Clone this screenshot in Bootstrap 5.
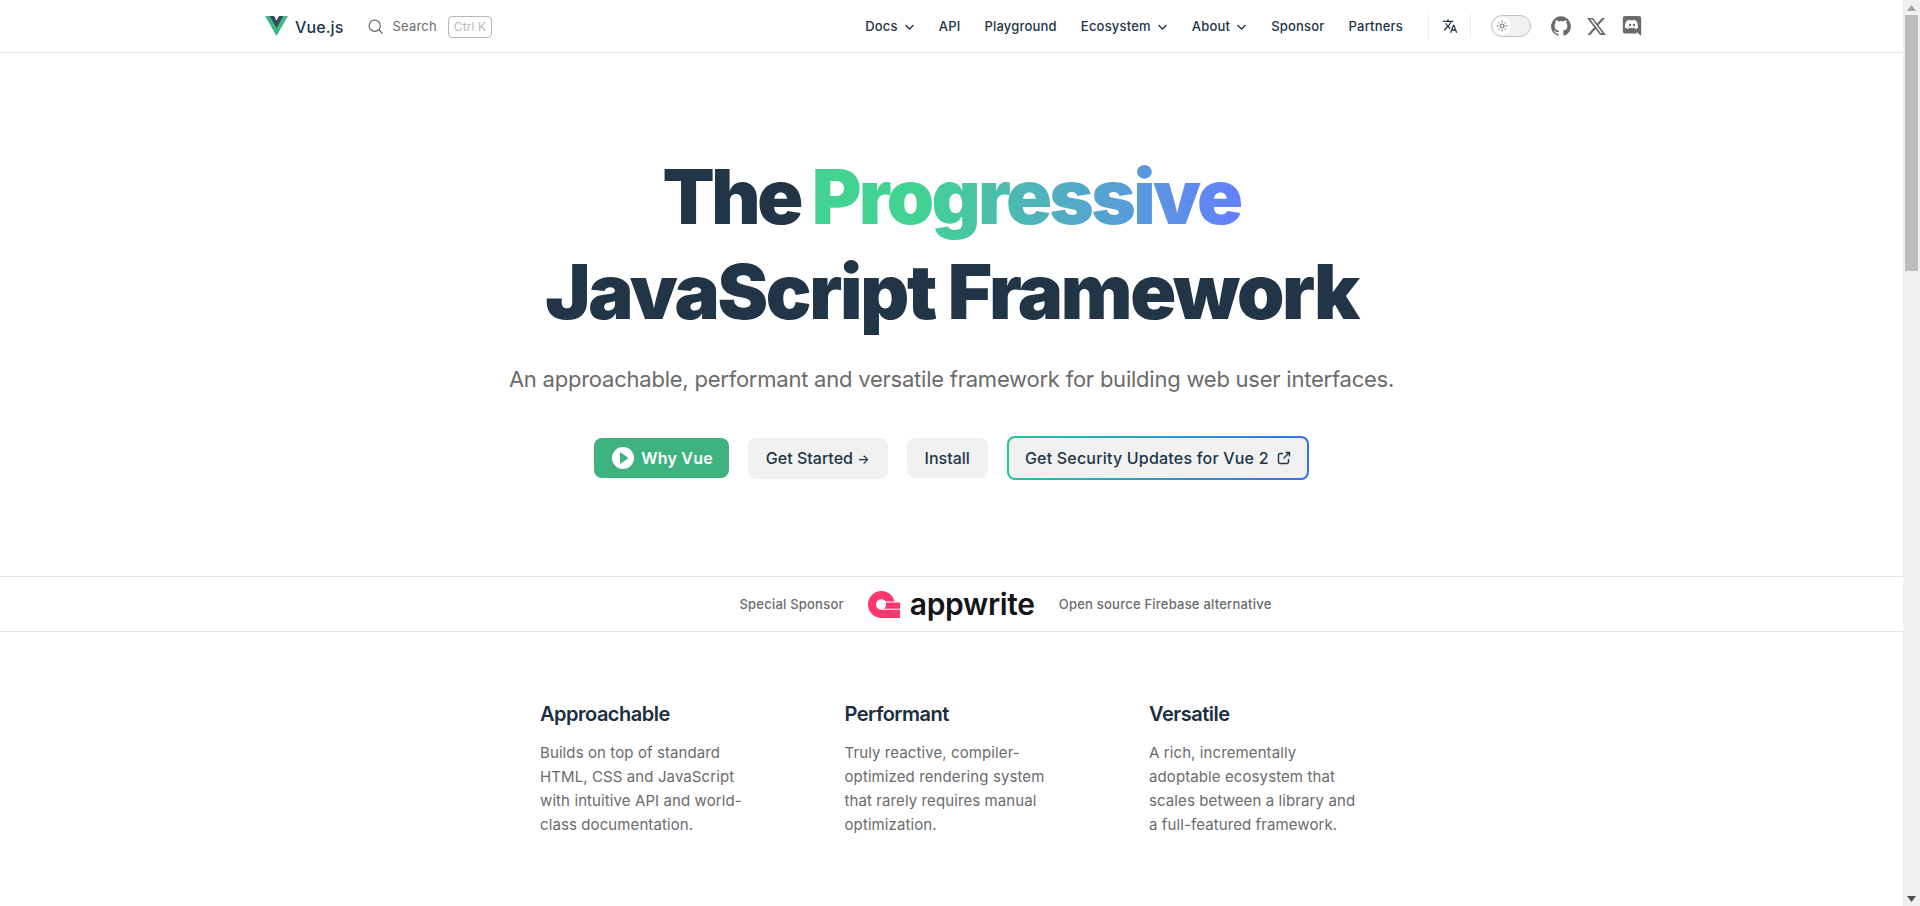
<!DOCTYPE html>
<html lang="en">
<head>
  <meta charset="UTF-8" />
  <title>Vue.js - The Progressive JavaScript Framework</title>
  <link href="https://cdn.jsdelivr.net/npm/bootstrap@5.3.0/dist/css/bootstrap.min.css" rel="stylesheet" />
  <style>
    html, body { height: 906px; overflow: hidden; }
    body { font-family: Inter, "Noto Sans", sans-serif; color: #213547; background: #fff; }
    .page-shell { height: 906px; }
    .page-main { min-width: 0; }
    /* top bar */
    .vue-nav { height: 53px; border-bottom: 1px solid #e5e5e5; padding: 0 261px 0 265px; }
    .vue-logo { color: #213547; font-size: 16px; font-weight: 500; letter-spacing: 0.1px; text-decoration: none; padding-top: 1px; }
    .vue-logo svg { margin-right: 7px; margin-top: -1px; }
    .search-box { color: #6b6b6b; font-size: 13px; margin-left: 25px; letter-spacing: 0.2px; padding-top: 1px; }
    .search-box svg { margin-right: 9px; }
    .key-hint { border: 1px solid #b8b8b8; border-radius: 4px; color: #b8b8b8; font-size: 12px; padding: 0 5px; height: 22px; line-height: 20px; margin-left: 11px; letter-spacing: 0.1px; }
    .nav-entry { color: #213547; font-size: 13px; font-weight: 500; letter-spacing: 0.2px; text-decoration: none; padding: 1px 12px 0; white-space: nowrap; }
    .nav-entry svg { margin-left: 6px; }
    .nav-rule { width: 1px; height: 24px; background: #ececec; }
    .nav-rule-first { margin-left: 13px; }
    .lang-icon { margin: 0 12px 0 13px; }
    .theme-switch { width: 40px; height: 22px; border-radius: 11px; background: #f1f1f1; border: 1px solid #c4c4c4; padding: 1px; margin: 0 20px 0 20px; }
    .theme-knob { width: 18px; height: 18px; border-radius: 50%; background: #fff; }
    .social-icon { fill: #6b6b6b; }
    .social-gap { margin-left: 16px; }
    /* hero */
    .hero-block { padding-top: 96px; height: 523px; }
    .hero-title { font-size: 76px; line-height: 95px; font-weight: 900; letter-spacing: -2.3px; color: #213547; margin: 0; }
    .hero-first { letter-spacing: -3.4px; }
    .hero-accent { letter-spacing: -2.7px; background: linear-gradient(90deg, #42d392 25%, #647eff); -webkit-background-clip: text; background-clip: text; color: transparent; }
    .hero-sub { font-size: 22px; line-height: 33px; letter-spacing: -0.23px; color: #6b6b6b; margin: 24px 0 40px; }
    .hero-btn { display: inline-block; font-size: 16px; font-weight: 500; line-height: 24px; padding: 8px 18px; border-radius: 8px; background: #f1f1f1; color: #213547; text-decoration: none; }
    .hero-btn.is-primary { background: #3fb37f; color: #fff; font-weight: 600; letter-spacing: 0.2px; padding-left: 18px; padding-right: 16px; height: 40px; }
    .hero-btn.is-primary svg { margin-right: 7px; }
    .hero-btn.is-security { background: linear-gradient(#f1f1f1, #f1f1f1) padding-box, linear-gradient(90deg, #1ec99a, #3b6cf5) border-box; border: 2px solid transparent; padding: 8px 16px; letter-spacing: 0.2px; color: #213547; }
    .hero-arrow { font-size: 13px; }
    .hero-actions { gap: 19px; }
    /* sponsor strip */
    .sponsor-strip { height: 56px; padding-left: 108px; border-top: 1px solid #e5e5e5; border-bottom: 1px solid #e5e5e5; font-size: 13px; font-weight: 500; letter-spacing: 0.22px; color: #6b6b6b; }
    .sponsor-note { margin: 0 24px; padding-top: 2px; }
    .appwrite-word { font-family: Inter, sans-serif; font-size: 30px; font-weight: 600; color: #14141a; letter-spacing: -0.3px; line-height: 42px; margin-left: 10px; }
    /* highlights */
    .feature-row { margin-left: 540px; padding-top: 68px; }
    .feature-item { width: 304.5px; }
    .feature-item h2 { font-size: 20px; font-weight: 600; letter-spacing: -0.5px; color: #1b2d3e; margin-bottom: 13px; line-height: 28px; }
    .feature-item p { width: 214px; font-size: 15px; line-height: 24px; letter-spacing: 0.1px; color: #6b6b6b; margin: 0; }
    /* browser scrollbar */
    .fake-scrollbar { width: 17px; background: #f0f0f0; }
    .fake-scrollbar-thumb { height: 256px; margin: 0 2px; background: #bdbdbd; }
    .fake-scrollbar-arrow { height: 15px; flex-shrink: 0; }
  </style>
</head>
<body>
  <div class="page-shell d-flex">
    <div class="page-main flex-grow-1">
      <nav class="vue-nav d-flex align-items-center">
        <a class="vue-logo d-flex align-items-center" href="#">
          <svg width="23" height="20" viewBox="0 0 261.76 226.69"><path fill="#41b883" d="M161.096.001l-30.225 52.351L100.647.001H-.005l130.877 226.688L261.749.001z"/><path fill="#34495e" d="M161.096.001l-30.225 52.351L100.647.001H52.346l78.526 136.01L209.398.001z"/></svg>
          Vue.js
        </a>
        <div class="search-box d-flex align-items-center">
          <svg width="15" height="15" viewBox="0 0 20 20" fill="none" stroke="#6b6b6b" stroke-width="1.6"><circle cx="9" cy="9" r="7.500"/><path d="M14.500 14.500L19 19" stroke-linecap="round"/></svg>
          <span>Search</span>
          <span class="key-hint">Ctrl K</span>
        </div>
        <div class="ms-auto d-flex align-items-center">
          <a class="nav-entry" href="#">Docs<svg width="11" height="10" viewBox="0 0 11 10" fill="none" stroke="#213547" stroke-width="1.300"><path d="M1.500 3l4 4 4-4"/></svg></a>
          <a class="nav-entry" href="#">API</a>
          <a class="nav-entry" href="#">Playground</a>
          <a class="nav-entry" href="#">Ecosystem<svg width="11" height="10" viewBox="0 0 11 10" fill="none" stroke="#213547" stroke-width="1.300"><path d="M1.500 3l4 4 4-4"/></svg></a>
          <a class="nav-entry" href="#">About<svg width="11" height="10" viewBox="0 0 11 10" fill="none" stroke="#213547" stroke-width="1.300"><path d="M1.500 3l4 4 4-4"/></svg></a>
          <a class="nav-entry" href="#">Sponsor</a>
          <a class="nav-entry" href="#">Partners</a>
          <span class="nav-rule nav-rule-first"></span>
          <svg class="lang-icon" width="16" height="16" viewBox="0 0 24 24" fill="#213547"><path d="M12.87 15.07l-2.54-2.51.03-.03A17.52 17.52 0 0014.07 6H17V4h-7V2H8v2H1v2h11.17C11.5 7.92 10.44 9.75 9 11.35 8.07 10.32 7.3 9.19 6.69 8h-2c.73 1.63 1.73 3.17 2.98 4.56l-5.09 5.02L4 19l5-5 3.11 3.11.76-2.04zM18.5 10h-2L12 22h2l1.12-3h4.75L21 22h2l-4.5-12zm-2.62 7l1.62-4.33L19.12 17h-3.24z"/></svg>
          <span class="nav-rule"></span>
          <div class="theme-switch">
            <div class="theme-knob d-flex align-items-center justify-content-center">
              <svg width="12" height="12" viewBox="0 0 24 24" fill="none" stroke="#6b6b6b" stroke-width="2" stroke-linecap="round"><circle cx="12" cy="12" r="4"/><path d="M12 2v2M12 20v2M2 12h2M20 12h2M5 5l1.400 1.400M17.600 17.600L19 19M5 19l1.400-1.400M17.600 6.400L19 5"/></svg>
            </div>
          </div>
          <svg class="social-icon" width="20" height="20" viewBox="0 0 24 24"><path d="M12 .3a12 12 0 00-3.8 23.38c.6.12.83-.26.83-.57L9 21.07c-3.34.72-4.04-1.61-4.04-1.61-.55-1.39-1.34-1.76-1.34-1.76-1.08-.74.09-.73.09-.73 1.2.09 1.83 1.24 1.83 1.24 1.08 1.83 2.81 1.3 3.5 1 .1-.78.42-1.31.76-1.61-2.67-.3-5.47-1.33-5.47-5.93 0-1.31.47-2.38 1.24-3.22-.14-.3-.54-1.52.1-3.18 0 0 1-.32 3.3 1.23a11.5 11.5 0 016 0c2.28-1.55 3.29-1.23 3.29-1.23.64 1.66.24 2.88.12 3.18a4.65 4.65 0 011.23 3.22c0 4.61-2.8 5.63-5.48 5.92.42.36.81 1.1.81 2.22l-.01 3.29c0 .31.2.69.82.57A12 12 0 0012 .3z"/></svg>
          <svg class="social-icon social-gap" width="19" height="19" viewBox="0 0 24 24"><path d="M18.9 1.15h3.68l-8.04 9.19L24 22.85h-7.41l-5.8-7.58-6.64 7.58H.47l8.6-9.83L0 1.15h7.59l5.24 6.93zM17.6 20.65h2.04L6.49 3.24H4.3z"/></svg>
          <svg class="social-icon social-gap" width="20" height="20" viewBox="0 0 24 24"><path d="M20.5 0H3.5A2.5 2.5 0 001 2.5v16A2.5 2.5 0 003.5 21H18l-.7-2.3 1.7 1.6 1.6 1.5L23 24V2.5A2.5 2.5 0 0020.5 0zm-5 15.6s-.5-.6-.9-1.1c1.7-.5 2.4-1.6 2.4-1.6-.6.4-1.1.6-1.6.8-.7.3-1.4.5-2 .6-1.3.2-2.5.2-3.6 0-.8-.2-1.5-.4-2-.6-.3-.1-.6-.3-1-.5l-.6-.3s.6 1.1 2.3 1.6l-.9 1.1c-3-.1-4.1-2-4.1-2 0-4.3 1.9-7.7 1.9-7.7 1.9-1.4 3.7-1.4 3.7-1.4l.1.2c-2.4.7-3.5 1.7-3.5 1.7l.8-.4c1.4-.6 2.6-.8 3-.8h.3c.9-.1 1.8-.1 2.8 0 1.3.2 2.7.5 4.1 1.3 0 0-1-1-3.3-1.7l.2-.2s1.9 0 3.7 1.4c0 0 1.9 3.4 1.9 7.7 0 0-1.1 1.9-4.1 2zM9.7 9.4c-.8 0-1.4.7-1.4 1.5s.6 1.5 1.4 1.5 1.4-.7 1.4-1.5-.6-1.5-1.4-1.5zm4.7 0c-.8 0-1.4.7-1.4 1.5s.6 1.5 1.4 1.5 1.4-.7 1.4-1.5-.6-1.5-1.4-1.5z"/></svg>
        </div>
      </nav>

      <section class="hero-block text-center">
        <h1 class="hero-title"><span class="hero-first">The <span class="hero-accent">Progressive</span></span><br />JavaScript Framework</h1>
        <p class="hero-sub">An approachable, performant and versatile framework for building web user interfaces.</p>
        <div class="hero-actions d-flex justify-content-center align-items-center">
          <a class="hero-btn is-primary d-inline-flex align-items-center" href="#">
            <svg width="22" height="22" viewBox="0 0 22 22"><circle cx="11" cy="11" r="11" fill="#fff"/><path d="M8 5l8.500 6L8 17z" fill="#3fb37f"/></svg>
            Why Vue
          </a>
          <a class="hero-btn" href="#">Get Started <span class="hero-arrow">→</span></a>
          <a class="hero-btn" href="#">Install</a>
          <a class="hero-btn is-security d-inline-flex align-items-center" href="#">
            Get Security Updates for Vue 2
            <svg class="ms-2" width="14" height="14" viewBox="0 0 14 14" fill="none" stroke="#213547" stroke-width="1.400"><path d="M11.500 8v3a1.500 1.500 0 01-1.500 1.500H3A1.500 1.500 0 011.500 11V4A1.500 1.500 0 013 2.500h3"/><path d="M8.500 1.500h4v4M12.500 1.500L6.500 7.500"/></svg>
          </a>
        </div>
      </section>

      <section class="sponsor-strip d-flex justify-content-center align-items-center">
        <span class="sponsor-note">Special Sponsor</span>
        <span class="d-flex align-items-center">
          <svg width="32" height="27" viewBox="0 0 31 26"><path fill="#fd366e" d="M31 26H13C5.800 26 0 20.200 0 13S5.800 0 13 0c6.200 0 11.400 4.300 12.700 10h-8.200C16.500 8.800 14.900 7.800 13 7.800 10.100 7.800 7.800 10.100 7.800 13s2.300 5.200 5.200 5.200h18z"/><path fill="#fd366e" d="M31 11v6H15.500c1.200-.8 2-2.300 2-4 0-.7-.1-1.400-.4-2z"/></svg>
          <span class="appwrite-word">appwrite</span>
        </span>
        <span class="sponsor-note">Open source Firebase alternative</span>
      </section>

      <section class="feature-row d-flex">
        <div class="feature-item">
          <h2>Approachable</h2>
          <p>Builds on top of standard HTML, CSS and JavaScript with intuitive API and world-class documentation.</p>
        </div>
        <div class="feature-item">
          <h2>Performant</h2>
          <p>Truly reactive, compiler-optimized rendering system that rarely requires manual optimization.</p>
        </div>
        <div class="feature-item">
          <h2>Versatile</h2>
          <p>A rich, incrementally adoptable ecosystem that scales between a library and a full-featured framework.</p>
        </div>
      </section>
    </div>

    <div class="fake-scrollbar flex-shrink-0 d-flex flex-column">
      <div class="fake-scrollbar-arrow d-flex align-items-center justify-content-center">
        <svg width="9" height="6" viewBox="0 0 9 6"><path d="M4.500 0L9 6H0z" fill="#a3a3a3"/></svg>
      </div>
      <div class="fake-scrollbar-thumb"></div>
      <div class="fake-scrollbar-arrow d-flex align-items-center justify-content-center mt-auto">
        <svg width="9" height="6" viewBox="0 0 9 6"><path d="M4.500 6L9 0H0z" fill="#505050"/></svg>
      </div>
    </div>
  </div>
  <script src="https://cdn.jsdelivr.net/npm/bootstrap@5.3.0/dist/js/bootstrap.bundle.min.js"></script>
</body>
</html>
